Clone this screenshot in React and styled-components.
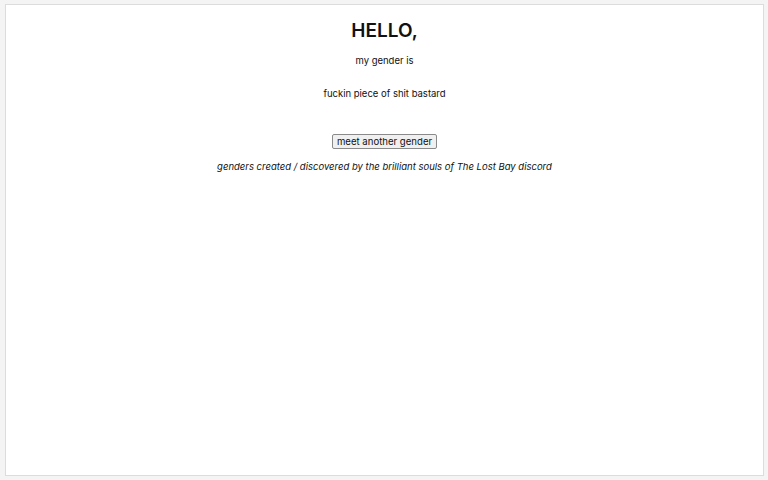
import React from "react";
import styled, { createGlobalStyle } from "styled-components";

const Global = createGlobalStyle`
  html, body { margin: 0; padding: 0; background: #f4f4f4; }
  body { font-family: Inter, "Liberation Sans", Arial, sans-serif; }
`;

const Frame = styled.div`
  box-sizing: border-box;
  height: 480px;
  padding: 4px 4px 4px 5px;
`;

const Panel = styled.main`
  box-sizing: border-box;
  height: 100%;
  background: #fff;
  border: 1px solid #dcdcdc;
  display: flex;
  flex-direction: column;
  align-items: center;
  padding-top: 14px;
  color: #111;
`;

const Title = styled.h1`
  margin: 0;
  font-size: 19px;
  font-weight: 600;
  line-height: 24px;
`;

const Line = styled.p`
  margin: ${(p) => p.$mt}px 0 0;
  font-size: 9.5px;
  line-height: 14px;
  font-style: ${(p) => (p.$italic ? "italic" : "normal")};
`;

const Button = styled.button`
  margin-top: 33px;
  font-family: Inter, "Liberation Sans", Arial, sans-serif;
  font-size: 9.6px;
  line-height: 11px;
  padding: 1px 4px;
  background: #f0f0f0;
  border: 1px solid #8a8a8a;
  border-radius: 2px;
  color: #111;
`;

export default function App() {
  return (
    <Frame>
      <Global />
      <Panel>
        <Title>HELLO,</Title>
        <Line $mt={11}>my gender is</Line>
        <Line $mt={19}>fuckin piece of shit bastard</Line>
        <Button>meet another gender</Button>
        <Line $mt={11} $italic>
          genders created / discovered by the brilliant souls of The Lost Bay discord
        </Line>
      </Panel>
    </Frame>
  );
}
